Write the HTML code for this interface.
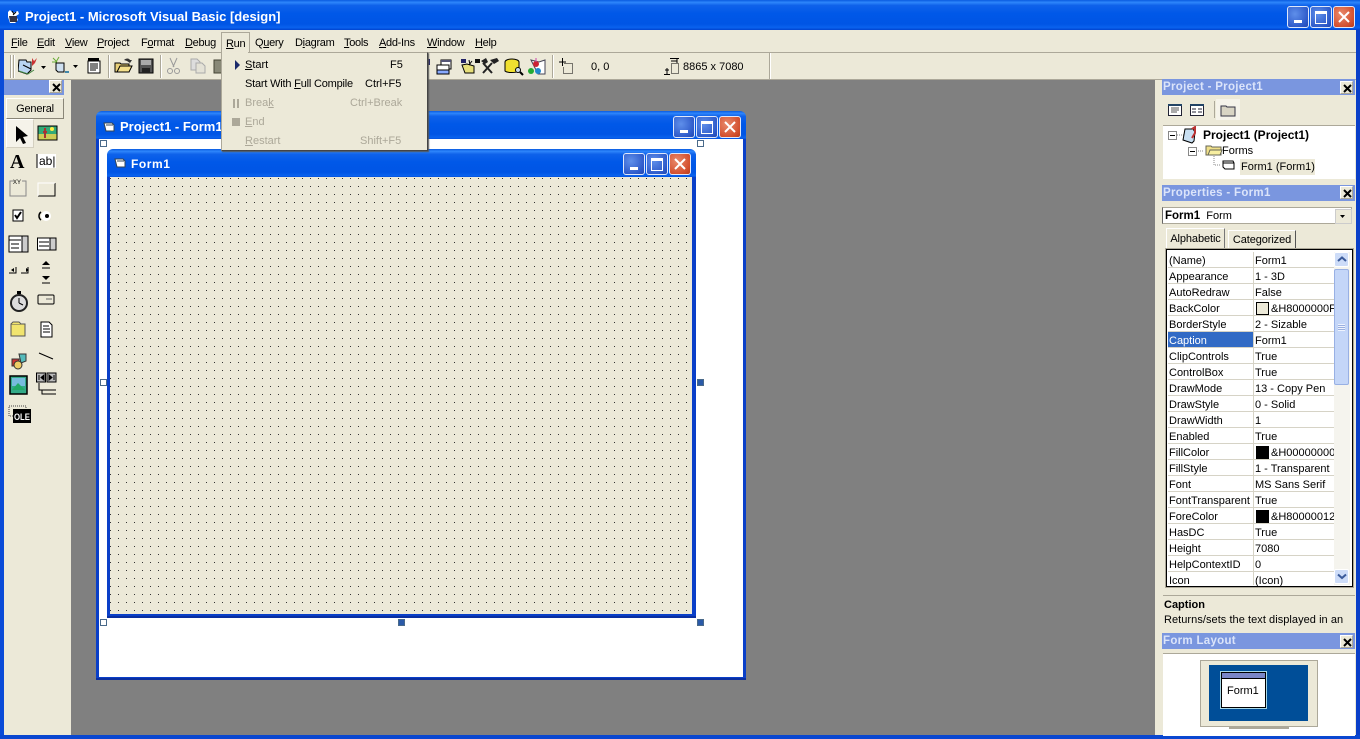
<!DOCTYPE html>
<html><head><meta charset="utf-8"><title>Project1 - Microsoft Visual Basic [design]</title>
<style>
html,body{margin:0;padding:0;width:1360px;height:739px;overflow:hidden;background:#ECE9D8;font-family:"Liberation Sans",sans-serif;font-size:11px;color:#000}
div,span,svg{position:absolute;white-space:nowrap}
u{position:static}
.m{top:36px;line-height:14px;height:14px;letter-spacing:-.3px}
.tb{background:linear-gradient(#0a5be0 0,#2e86fb 8%,#0f62ea 18%,#0058e8 45%,#0055e5 80%,#0a62ee 92%,#0043cf 100%)}
.cap{color:#fff;font-weight:bold;font-size:13px;line-height:18px}
.b{width:20px;height:20px;border:1px solid #dfe8fb;border-radius:3px;background:radial-gradient(circle at 35% 35%,#5f8fea,#2c58c8 75%,#2347ae)}
.x{background:radial-gradient(circle at 35% 35%,#e98a6c,#d3502f 70%,#b63c1e)}
.pt{left:1162px;width:193px;height:16px;background:#7a96df;color:#dbe4fa;font-weight:bold;font-size:11.5px;letter-spacing:.3px;line-height:16px;text-indent:1px}
.cl{width:13px;height:13px;background:#ece9d8;border:1px solid #fff;border-right-color:#aca899;border-bottom-color:#aca899;box-sizing:border-box;font-weight:bold}
.h{width:5px;height:5px;border:1px solid #4a6a8a;background:#fff}
.hf{background:#2a5aa8}
.g{color:#aca899}
.r{position:relative;height:15px;border-bottom:1px solid #d6d3c6;line-height:15px}
.r span{top:2px}
.r .sw{width:11px;height:11px;left:88px;top:2px;border:1px solid #000;background:#000}
.sep{width:1px;background:#aca899;border-right:1px solid #fff}
</style></head><body>

<!-- main title -->
<div class="tb" style="left:0;top:0;width:1360px;height:30px"></div>
<div style="left:0;top:30px;width:4px;height:709px;background:#0a4bd8"></div>
<div style="left:1356px;top:30px;width:4px;height:709px;background:#0a3fc8"></div>
<div style="left:0;top:735px;width:1360px;height:4px;background:#0a47d0"></div>
<svg style="left:6px;top:9px" width="16" height="16" viewBox="0 0 16 16"><path d="M2 3l2-2 3 3 5-2 1 3-3 2 2 4-3 3H4L2 8z" fill="#fff"/><path d="M3 7h8v6H4z" fill="#334"/><path d="M6 2l2 3M10 3L7 6" stroke="#000"/></svg>
<div class="cap" style="left:25px;top:8px">Project1 - Microsoft Visual Basic [design]</div>
<div class="b" style="left:1287px;top:6px"><div style="left:6px;top:13px;width:8px;height:3px;background:#fff"></div></div>
<div class="b" style="left:1310px;top:6px"><div style="left:4px;top:4px;width:10px;height:9px;border:1px solid #fff;border-top-width:3px"></div></div>
<div class="b x" style="left:1333px;top:6px"><svg style="left:4px;top:4px" width="12" height="12"><path d="M1 1l10 10M11 1L1 11" stroke="#fff" stroke-width="2"/></svg></div>

<!-- client -->
<div style="left:4px;top:30px;width:1352px;height:50px;background:#ECE9D8"></div>
<div style="left:4px;top:52px;width:1352px;height:1px;background:#aca899"></div>
<div style="left:4px;top:79px;width:1352px;height:1px;background:#aca899"></div>
<div style="left:71px;top:80px;width:1084px;height:655px;background:#808080"></div>

<!-- menu -->
<div class="m" style="left:11px"><u>F</u>ile</div>
<div class="m" style="left:37px"><u>E</u>dit</div>
<div class="m" style="left:65px"><u>V</u>iew</div>
<div class="m" style="left:97px"><u>P</u>roject</div>
<div class="m" style="left:141px">F<u>o</u>rmat</div>
<div class="m" style="left:185px"><u>D</u>ebug</div>
<div style="left:221px;top:32px;width:27px;height:20px;border:1px solid #aca899;border-bottom:0;background:#ECE9D8"></div>
<div class="m" style="left:226px;top:37px"><u>R</u>un</div>
<div class="m" style="left:255px">Q<u>u</u>ery</div>
<div class="m" style="left:295px">D<u>i</u>agram</div>
<div class="m" style="left:344px"><u>T</u>ools</div>
<div class="m" style="left:379px"><u>A</u>dd-Ins</div>
<div class="m" style="left:427px"><u>W</u>indow</div>
<div class="m" style="left:475px"><u>H</u>elp</div>

<!-- toolbar -->
<div class="sep" style="left:10px;top:55px;height:23px"></div>
<div class="sep" style="left:13px;top:55px;height:23px"></div>
<svg style="left:18px;top:55px" width="210" height="22" viewBox="0 0 210 22">
<path d="M1 5h7l1 2h4v8l-4 4-9-3z" fill="#b9d4f2" stroke="#000"/><path d="M5 10l8 4" stroke="#000"/><path d="M14 3l2 3 3-3-2 5-3 3z" fill="#c33"/><path d="M1 16l9 3 6-4" fill="none" stroke="#484"/>
<path d="M24 10l5 0-2.500 3z" fill="#000" transform="translate(-1,1)"/>
<path d="M35 3l4 4M41 2l-3 5M34 7h5" stroke="#6a3" fill="none"/><path d="M38 8h8v9h-6l-2-2z" fill="#cfe0f0" stroke="#000"/><path d="M47 17h4" stroke="#48a" stroke-width="2"/>
<path d="M55 10h5l-2.500 3z" fill="#000"/>
<rect x="70" y="3" width="11" height="3" fill="#000"/><rect x="70" y="6" width="12" height="12" fill="#fff" stroke="#000"/><path d="M72 9h8M72 11h8M72 13h8M72 15h6" stroke="#000"/>
<path d="M97 8h5l1 1h8v8H97z" fill="#e8d078" stroke="#000"/><path d="M99 17l3-6h12l-3 6z" fill="#f4e08c" stroke="#000"/><path d="M106 5c2-2 5-2 6 0l2 0-2 3-3-2" fill="#333"/>
<rect x="121" y="4" width="14" height="14" fill="#555" stroke="#000"/><rect x="123" y="5" width="10" height="5" fill="#aaa"/><rect x="124" y="13" width="8" height="5" fill="#222"/>
<path d="M152 3l4 9M159 3l-4 9" stroke="#999" fill="none"/><circle cx="152" cy="16" r="2.500" fill="none" stroke="#999"/><circle cx="159" cy="16" r="2.500" fill="none" stroke="#999"/>
<path d="M173 4h6l3 3v8h-9z" fill="#ddd" stroke="#aaa"/><path d="M178 8h6l3 3v7h-9z" fill="#e4e2d6" stroke="#aaa"/>
<rect x="196" y="5" width="10" height="13" fill="#887" stroke="#443"/>
</svg>
<div class="sep" style="left:108px;top:55px;height:23px"></div>
<div class="sep" style="left:160px;top:55px;height:23px"></div>

<svg style="left:428px;top:55px" width="125" height="22" viewBox="0 0 125 22">
<rect x="0" y="4" width="2" height="6" fill="#226"/>
<rect x="13" y="5" width="10" height="9" fill="#fff" stroke="#000"/><rect x="13" y="5" width="10" height="2" fill="#557"/><rect x="9" y="10" width="12" height="9" fill="#fff" stroke="#000"/><rect x="9" y="15" width="12" height="4" fill="#8af" stroke="#000"/>
<rect x="33" y="4" width="5" height="4" fill="#226"/><rect x="47" y="4" width="5" height="4" fill="#111"/><path d="M34 10l5-1 7 2v7H37z" fill="#e7df7a" stroke="#000"/><path d="M44 6l-3 4M41 5l1 5" stroke="#000"/>
<path d="M55 18l9-10M64 18l-9-10" stroke="#222" stroke-width="2"/><path d="M53 6l5-3 2 4-3 2zM62 5l7-2 2 3-5 3z" fill="#222"/>
<ellipse cx="84" cy="7" rx="7" ry="3" fill="#f0e030" stroke="#000"/><path d="M77 7v9c2 2 11 2 14 0V7" fill="#f0e030" stroke="#000"/><circle cx="90" cy="15" r="2.500" fill="#cde" stroke="#000"/><path d="M92 17l3 3" stroke="#000" stroke-width="2"/>
<path d="M103 5l8 2 6-2v14h-7z" fill="#fff" stroke="#445"/><circle cx="108" cy="9" r="3" fill="#c23"/><circle cx="103" cy="16" r="3" fill="#2a3"/><circle cx="110" cy="16" r="3" fill="#28c"/><path d="M108 3v4" stroke="#c4a"/>
</svg>
<div class="sep" style="left:552px;top:55px;height:23px"></div>
<svg style="left:558px;top:58px" width="18" height="18"><path d="M1 4h7M4.500 0v8" stroke="#000"/><path d="M6.500 5.500h8v10h-9v-7" fill="none" stroke="#000" stroke-dasharray="1 1"/></svg>
<div style="left:591px;top:60px;line-height:14px">0, 0</div>
<svg style="left:662px;top:58px" width="18" height="18"><path d="M2 16.500h6M5 10v6M3 12h4M8 .5h9" stroke="#000" fill="none"/><path d="M9.500 5.500h7v10h-7z" fill="none" stroke="#000" stroke-dasharray="1 1"/><path d="M9 3h6M15 1v4" stroke="#000"/></svg>
<div style="left:683px;top:60px;line-height:14px">8865 x 7080</div>
<div class="sep" style="left:769px;top:53px;height:26px"></div>

<!-- toolbox -->
<div style="left:4px;top:80px;width:67px;height:655px;background:#ECE9D8"></div>
<div style="left:4px;top:80px;width:60px;height:15px;background:#7a96df"></div>
<div class="cl" style="left:49px;top:80px"><svg style="left:2px;top:2px" width="9" height="9"><path d="M1 1l7 7M8 1L1 8" stroke="#000" stroke-width="2"/></svg></div>
<div style="left:6px;top:98px;width:56px;height:19px;background:#ECE9D8;border:1px solid #fff;border-right-color:#8a8678;border-bottom-color:#8a8678;text-align:center;line-height:20px;letter-spacing:-.2px">General</div>
<div style="left:6px;top:119px;width:26px;height:27px;background:#f5f3ea;border:1px solid #fff;border-right-color:#d4d0c0;border-bottom-color:#d4d0c0"></div>
<svg style="left:4px;top:118px" width="66" height="310" viewBox="0 0 66 310">
<path d="M12 8v16l4-4 3 6 3-1-3-6 5-1z" fill="#000"/>
<rect x="34" y="8" width="19" height="14" fill="#3a7"/><rect x="34" y="16" width="19" height="6" fill="#cc5"/><circle cx="48" cy="11" r="2" fill="#fe4"/><path d="M41 10v10M39 14h4" stroke="#a33" stroke-width="2"/><rect x="34" y="8" width="19" height="14" fill="none" stroke="#000"/>
<text x="6" y="50" font-family="Liberation Serif" font-weight="bold" font-size="20">A</text>
<rect x="33" y="36" width="19" height="14" fill="#fff"/><path d="M33 36v14" stroke="#000"/><text x="35" y="47" font-size="12">ab|</text>
<rect x="6" y="63" width="16" height="15" fill="none" stroke="#888"/><rect x="10" y="60" width="8" height="5" fill="#ece9d8"/><text x="9" y="66" font-size="6">XY</text>
<path d="M34 78h17V65" fill="none" stroke="#000"/><path d="M34 78V65h17" fill="none" stroke="#fff"/>
<rect x="9" y="92" width="10" height="11" fill="#fff" stroke="#000"/><path d="M11 97l2 3 4-6" stroke="#000" stroke-width="2" fill="none"/>
<path d="M37 94a5 5 0 0 0 0 8" fill="none" stroke="#000" stroke-width="1.500"/><circle cx="42" cy="98" r="5" fill="#fff"/><circle cx="43" cy="98" r="2" fill="#000"/>
<rect x="5" y="118" width="18" height="16" fill="#fff" stroke="#000"/><path d="M5 122h12M7 126h8M7 130h8" stroke="#000"/><rect x="18" y="118" width="6" height="16" fill="#ccc" stroke="#000"/>
<rect x="33.500" y="120" width="18" height="12" fill="#fff" stroke="#000"/><path d="M35 124h10M35 128h10" stroke="#000"/><rect x="46" y="120" width="6" height="12" fill="#ccc" stroke="#000"/>
<path d="M5 155h7v-6" fill="none" stroke="#000"/><path d="M10 150v4l-3-2zM22 150v4l3-2z" fill="#000"/><path d="M17 155h7v-6" fill="none" stroke="#000"/>
<path d="M38 147l4-4 4 4z M38 158l4 4 4-4z" fill="#000"/><path d="M38 150h8M38 165h8" stroke="#000"/>
<circle cx="15" cy="185" r="8" fill="#ddd" stroke="#222" stroke-width="2"/><path d="M15 185v-5M15 185l4 2" stroke="#000"/><rect x="13" y="173" width="4" height="3" fill="#000"/>
<rect x="34" y="177" width="16" height="9" rx="1" fill="#ece9d8" stroke="#000"/><path d="M42 181h6" stroke="#666"/>
<path d="M7 206h14v12H7z" fill="#f1e46e" stroke="#555"/><path d="M7 206l2-2h6l2 2" fill="#f1e46e" stroke="#555"/>
<path d="M37 204h8l3 3v12H37z" fill="#fff" stroke="#000"/><path d="M39 208h6M39 211h7M39 214h7" stroke="#000"/>
<rect x="8" y="241" width="7" height="7" fill="#c33" stroke="#333"/><path d="M15 236l7 0v7l-5 2z" fill="#5bb" stroke="#333"/><circle cx="14" cy="247" r="4" fill="#ec6" stroke="#333"/>
<path d="M35 235l14 6" stroke="#000"/>
<rect x="6" y="258" width="17" height="18" fill="#3a8" stroke="#000" stroke-width="1.500"/><rect x="8" y="260" width="13" height="8" fill="#7bd"/><path d="M8 272l6-7 7 7z" fill="#2a6"/>
<rect x="32.500" y="255" width="9" height="9" fill="#bbb" stroke="#000"/><rect x="43" y="255" width="9" height="9" fill="#bbb" stroke="#000"/><path d="M35 265v7h17M38 272v4h14M38 272h10" fill="none" stroke="#000"/><path d="M35 257v5M40 257l-3 2.500 3 2.500zM45 257l3 2.500-3 2.500zM50 257v5" stroke="#000" fill="#000"/>
<rect x="5" y="288" width="17" height="10" fill="none" stroke="#444" stroke-dasharray="1 1"/><rect x="9" y="291" width="18" height="14" fill="#000"/><text x="10" y="302" fill="#fff" font-size="9" font-weight="bold" textLength="16" lengthAdjust="spacingAndGlyphs">OLE</text>
</svg>

<!-- Outer form window -->
<div class="tb" style="left:96px;top:111px;width:650px;height:29px;border-radius:6px 6px 0 0"></div>
<div style="left:96px;top:139px;width:650px;height:541px;background:#0a3fc8"></div>
<div style="left:96px;top:678px;width:650px;height:2px;background:#0a2fa0"></div>
<div style="left:99px;top:139px;width:644px;height:538px;background:#fff"></div>
<svg style="left:103px;top:121px" width="13" height="13"><path d="M1 2h8l2 2v6H3z" fill="#fff" stroke="#345"/><path d="M3 4h7" stroke="#345"/></svg>
<div class="cap" style="left:120px;top:118px">Project1 - Form1 (Form)</div>
<div class="b" style="left:673px;top:116px"><div style="left:6px;top:13px;width:8px;height:3px;background:#fff"></div></div>
<div class="b" style="left:696px;top:116px"><div style="left:4px;top:4px;width:10px;height:9px;border:1px solid #fff;border-top-width:3px"></div></div>
<div class="b x" style="left:719px;top:116px"><svg style="left:4px;top:4px" width="12" height="12"><path d="M1 1l10 10M11 1L1 11" stroke="#fff" stroke-width="2"/></svg></div>

<!-- Inner form window -->
<div class="tb" style="left:107px;top:149px;width:589px;height:29px;border-radius:6px 6px 0 0"></div>
<div style="left:107px;top:177px;width:589px;height:441px;background:#0a3fc8"></div>
<div style="left:107px;top:616px;width:589px;height:2px;background:#0a2fa0"></div>
<svg style="left:110px;top:177px;width:582px;height:437px" width="582" height="437"><defs><pattern id="d" width="8" height="8" patternUnits="userSpaceOnUse"><rect width="8" height="8" fill="#ECE9D8"/><rect width="1" height="1" x="0" y="1" fill="#333"/></pattern></defs><rect width="582" height="437" fill="url(#d)"/></svg>
<svg style="left:114px;top:157px" width="13" height="13"><path d="M1 2h8l2 2v6H3z" fill="#fff" stroke="#345"/><path d="M3 4h7" stroke="#345"/></svg>
<div class="cap" style="left:131px;top:155px;font-size:12px;letter-spacing:.55px">Form1</div>
<div class="b" style="left:623px;top:153px"><div style="left:6px;top:13px;width:8px;height:3px;background:#fff"></div></div>
<div class="b" style="left:646px;top:153px"><div style="left:4px;top:4px;width:10px;height:9px;border:1px solid #fff;border-top-width:3px"></div></div>
<div class="b x" style="left:669px;top:153px"><svg style="left:4px;top:4px" width="12" height="12"><path d="M1 1l10 10M11 1L1 11" stroke="#fff" stroke-width="2"/></svg></div>

<div class="h" style="left:100px;top:140px"></div>
<div class="h" style="left:697px;top:140px"></div>
<div class="h" style="left:100px;top:379px"></div>
<div class="h hf" style="left:697px;top:379px"></div>
<div class="h" style="left:100px;top:619px"></div>
<div class="h hf" style="left:398px;top:619px"></div>
<div class="h hf" style="left:697px;top:619px"></div>

<!-- Run menu -->
<div style="left:221px;top:52px;width:205px;height:97px;background:#ECE9D8;border:1px solid #aca899;border-right:1px solid #444;border-bottom:1px solid #444;box-shadow:1px 1px 1px #555"></div>
<div style="left:222px;top:52px;width:26px;height:1px;background:#ECE9D8"></div>
<svg style="left:234px;top:59px" width="8" height="12"><path d="M1 1l5 5-5 5z" fill="#1a2a6a"/></svg>
<div style="left:245px;top:58px;line-height:14px"><u>S</u>tart</div><div style="left:390px;top:58px;line-height:14px">F5</div>
<div style="left:245px;top:77px;line-height:14px;letter-spacing:-.2px">Start With <u>F</u>ull Compile</div><div style="left:365px;top:77px;line-height:14px">Ctrl+F5</div>
<div style="left:233px;top:99px;width:2px;height:9px;background:#aca899"></div><div style="left:237px;top:99px;width:2px;height:9px;background:#aca899"></div>
<div class="g" style="left:245px;top:96px;line-height:14px">Brea<u>k</u></div><div class="g" style="left:350px;top:96px;line-height:14px">Ctrl+Break</div>
<div style="left:232px;top:118px;width:8px;height:8px;background:#aca899"></div>
<div class="g" style="left:245px;top:115px;line-height:14px"><u>E</u>nd</div>
<div class="g" style="left:245px;top:134px;line-height:14px"><u>R</u>estart</div><div class="g" style="left:360px;top:134px;line-height:14px">Shift+F5</div>

<!-- Project panel -->
<div class="pt" style="top:79px">Project - Project1</div>
<div class="cl" style="left:1340px;top:81px"><svg style="left:2px;top:2px" width="9" height="9"><path d="M1 1l7 7M8 1L1 8" stroke="#000" stroke-width="2"/></svg></div>
<svg style="left:1166px;top:101px" width="76" height="18"><rect x="2.500" y="3.500" width="13" height="11" fill="#fff" stroke="#223"/><rect x="2" y="3" width="14" height="2" fill="#246"/><path d="M5 7h8M5 9h8M5 11h6" stroke="#555"/><rect x="24.500" y="3.500" width="13" height="11" fill="#fff" stroke="#223"/><rect x="24" y="3" width="14" height="2" fill="#246"/><path d="M26 8h4M26 11h4M32 8h4M32 11h4" stroke="#223"/></svg>
<div style="left:1214px;top:101px;width:1px;height:17px;background:#aca899"></div>
<div style="left:1216px;top:99px;width:24px;height:21px;background:#f5f3ea"></div>
<svg style="left:1220px;top:101px" width="16" height="17"><path d="M1 5h5l1 1h8v9H1z" fill="#d8d4c4" stroke="#334"/></svg>
<div style="left:1163px;top:125px;width:192px;height:53px;background:#fff;border-top:1px solid #aca899"></div>
<svg style="left:1166px;top:126px" width="80" height="50"><path d="M11 9h10M30 25h8M48 26v13h6" stroke="#888" stroke-dasharray="1 1" fill="none"/><rect x="2.500" y="5.500" width="8" height="8" fill="#fff" stroke="#888"/><path d="M4 9.500h5" stroke="#000"/><rect x="22.500" y="21.500" width="8" height="8" fill="#fff" stroke="#888"/><path d="M24 25.500h5" stroke="#000"/>
<path d="M19 3h8l2 3-1 9-2 2-9-3z" fill="#c8dff2" stroke="#000"/><path d="M26 3l3-2 0 6-3 5" stroke="#b33" fill="none" stroke-width="2"/>
<path d="M40 20h5l1 1h9v8H40z" fill="#f0e08a" stroke="#665"/><path d="M42 29l2-5h12l-2 5z" fill="#f7eea0" stroke="#665"/>
<path d="M57 35h10l1 2v6h-9l-2-2z" fill="#fff" stroke="#000"/><path d="M57 37h11" stroke="#000"/></svg>
<div style="left:1203px;top:128px;line-height:15px;font-weight:bold;font-size:12px">Project1 (Project1)</div>
<div style="left:1222px;top:144px;line-height:15px">Forms</div>
<div style="left:1240px;top:159px;width:75px;height:16px;background:#ece9d8;line-height:17px;text-indent:1px">Form1 (Form1)</div>

<!-- Properties panel -->
<div class="pt" style="top:185px">Properties - Form1</div>
<div class="cl" style="left:1340px;top:186px"><svg style="left:2px;top:2px" width="9" height="9"><path d="M1 1l7 7M8 1L1 8" stroke="#000" stroke-width="2"/></svg></div>
<div style="left:1162px;top:207px;width:188px;height:15px;background:#fff;border:1px solid #aca899;border-left-color:#666;line-height:17px;text-indent:2px"><b style="position:static;font-size:11.500px">Form1</b>&nbsp; Form</div>
<div style="left:1335px;top:209px;width:15px;height:13px;background:#ece9d8;border:1px solid #ccc"></div>
<svg style="left:1339px;top:214px" width="8" height="5"><path d="M1 1h5l-2.500 3z" fill="#000"/></svg>
<div style="left:1166px;top:228px;width:57px;height:20px;background:#ECE9D8;border:1px solid #fff;border-right-color:#777;border-bottom:0;text-align:center;line-height:20px;letter-spacing:-.1px">Alphabetic</div>
<div style="left:1228px;top:230px;width:66px;height:17px;background:#ECE9D8;border:1px solid #fff;border-right-color:#555;border-bottom:0;text-align:center;line-height:18px;letter-spacing:-.1px">Categorized</div>
<div style="left:1166px;top:249px;width:185px;height:336px;border:1px solid #000;border-right-width:1px;outline:1px solid #aca899;background:#fff"></div>
<div style="left:1168px;top:252px;width:166px;height:334px;overflow:hidden;background:#fff">
<div style="position:relative;width:166px">
<div class="r"><span style="left:1px">(Name)</span><span style="left:87px">Form1</span></div>
<div class="r"><span style="left:1px">Appearance</span><span style="left:87px">1 - 3D</span></div>
<div class="r"><span style="left:1px">AutoRedraw</span><span style="left:87px">False</span></div>
<div class="r"><span style="left:1px">BackColor</span><span class="sw" style="background:#ece9d8"></span><span style="left:103px;width:63px;overflow:hidden">&amp;H8000000F</span></div>
<div class="r"><span style="left:1px">BorderStyle</span><span style="left:87px">2 - Sizable</span></div>
<div class="r"><span style="left:0;top:0;width:85px;height:15px;background:#316ac5;color:#fff;text-indent:1px;line-height:19px">Caption</span><span style="left:87px">Form1</span></div>
<div class="r"><span style="left:1px">ClipControls</span><span style="left:87px">True</span></div>
<div class="r"><span style="left:1px">ControlBox</span><span style="left:87px">True</span></div>
<div class="r"><span style="left:1px">DrawMode</span><span style="left:87px">13 - Copy Pen</span></div>
<div class="r"><span style="left:1px">DrawStyle</span><span style="left:87px">0 - Solid</span></div>
<div class="r"><span style="left:1px">DrawWidth</span><span style="left:87px">1</span></div>
<div class="r"><span style="left:1px">Enabled</span><span style="left:87px">True</span></div>
<div class="r"><span style="left:1px">FillColor</span><span class="sw"></span><span style="left:103px;width:63px;overflow:hidden">&amp;H00000000</span></div>
<div class="r"><span style="left:1px">FillStyle</span><span style="left:87px">1 - Transparent</span></div>
<div class="r"><span style="left:1px">Font</span><span style="left:87px">MS Sans Serif</span></div>
<div class="r"><span style="left:1px">FontTransparent</span><span style="left:87px">True</span></div>
<div class="r"><span style="left:1px">ForeColor</span><span class="sw"></span><span style="left:103px;width:63px;overflow:hidden">&amp;H80000012</span></div>
<div class="r"><span style="left:1px">HasDC</span><span style="left:87px">True</span></div>
<div class="r"><span style="left:1px">Height</span><span style="left:87px">7080</span></div>
<div class="r"><span style="left:1px">HelpContextID</span><span style="left:87px">0</span></div>
<div class="r" style="border:0"><span style="left:1px">Icon</span><span style="left:87px">(Icon)</span></div>
</div></div>
<div style="left:1253px;top:252px;width:1px;height:333px;background:#d6d3c6"></div>
<!-- scrollbar -->
<div style="left:1334px;top:252px;width:16px;height:333px;background:#f5f4ee"></div>
<div style="left:1334px;top:252px;width:15px;height:15px;background:#cddcf8;border:1px solid #fff;border-radius:2px;box-sizing:border-box"></div>
<svg style="left:1337px;top:256px" width="10" height="7"><path d="M1 5l4-3.500L9 5" fill="none" stroke="#3a5a9a" stroke-width="2"/></svg>
<div style="left:1334px;top:269px;width:15px;height:116px;background:#c4d6f8;border:1px solid #98b0e4;border-radius:2px;box-sizing:border-box"></div>
<div style="left:1338px;top:324px;width:7px;height:7px;background:repeating-linear-gradient(#eef3fe 0 1px,#9ab0e0 1px 2px)"></div>
<div style="left:1334px;top:569px;width:15px;height:15px;background:#cddcf8;border:1px solid #fff;border-radius:2px;box-sizing:border-box"></div>
<svg style="left:1337px;top:573px" width="10" height="7"><path d="M1 1.500L5 5l4-3.500" fill="none" stroke="#3a5a9a" stroke-width="2"/></svg>

<!-- Description -->
<div style="left:1163px;top:595px;width:192px;height:1px;background:#aca899"></div>
<div style="left:1164px;top:598px;line-height:14px;font-weight:bold">Caption</div>
<div style="left:1164px;top:613px;line-height:14px;letter-spacing:.05px">Returns/sets the text displayed in an</div>

<!-- Form Layout -->
<div class="pt" style="top:633px">Form Layout</div>
<div class="cl" style="left:1340px;top:635px"><svg style="left:2px;top:2px" width="9" height="9"><path d="M1 1l7 7M8 1L1 8" stroke="#000" stroke-width="2"/></svg></div>
<div style="left:1163px;top:653px;width:192px;height:82px;background:#fff;border-top:1px solid #aca899"></div>
<div style="left:1200px;top:660px;width:116px;height:65px;background:#ece9d8;border:1px solid #aca899"></div>
<div style="left:1209px;top:665px;width:99px;height:56px;background:#004e98"></div>
<div style="left:1229px;top:726px;width:60px;height:3px;background:#aca899"></div>
<div style="left:1220px;top:671px;width:45px;height:36px;background:#a8d8e8;border:1px solid #a8d8e8"></div>
<div style="left:1221px;top:672px;width:43px;height:34px;background:#fff;border:1px solid #000"></div>
<div style="left:1222px;top:673px;width:43px;height:5px;background:#7a86c8;border-bottom:1px solid #000"></div>
<div style="left:1227px;top:684px;line-height:14px">Form1</div>
</body></html>
